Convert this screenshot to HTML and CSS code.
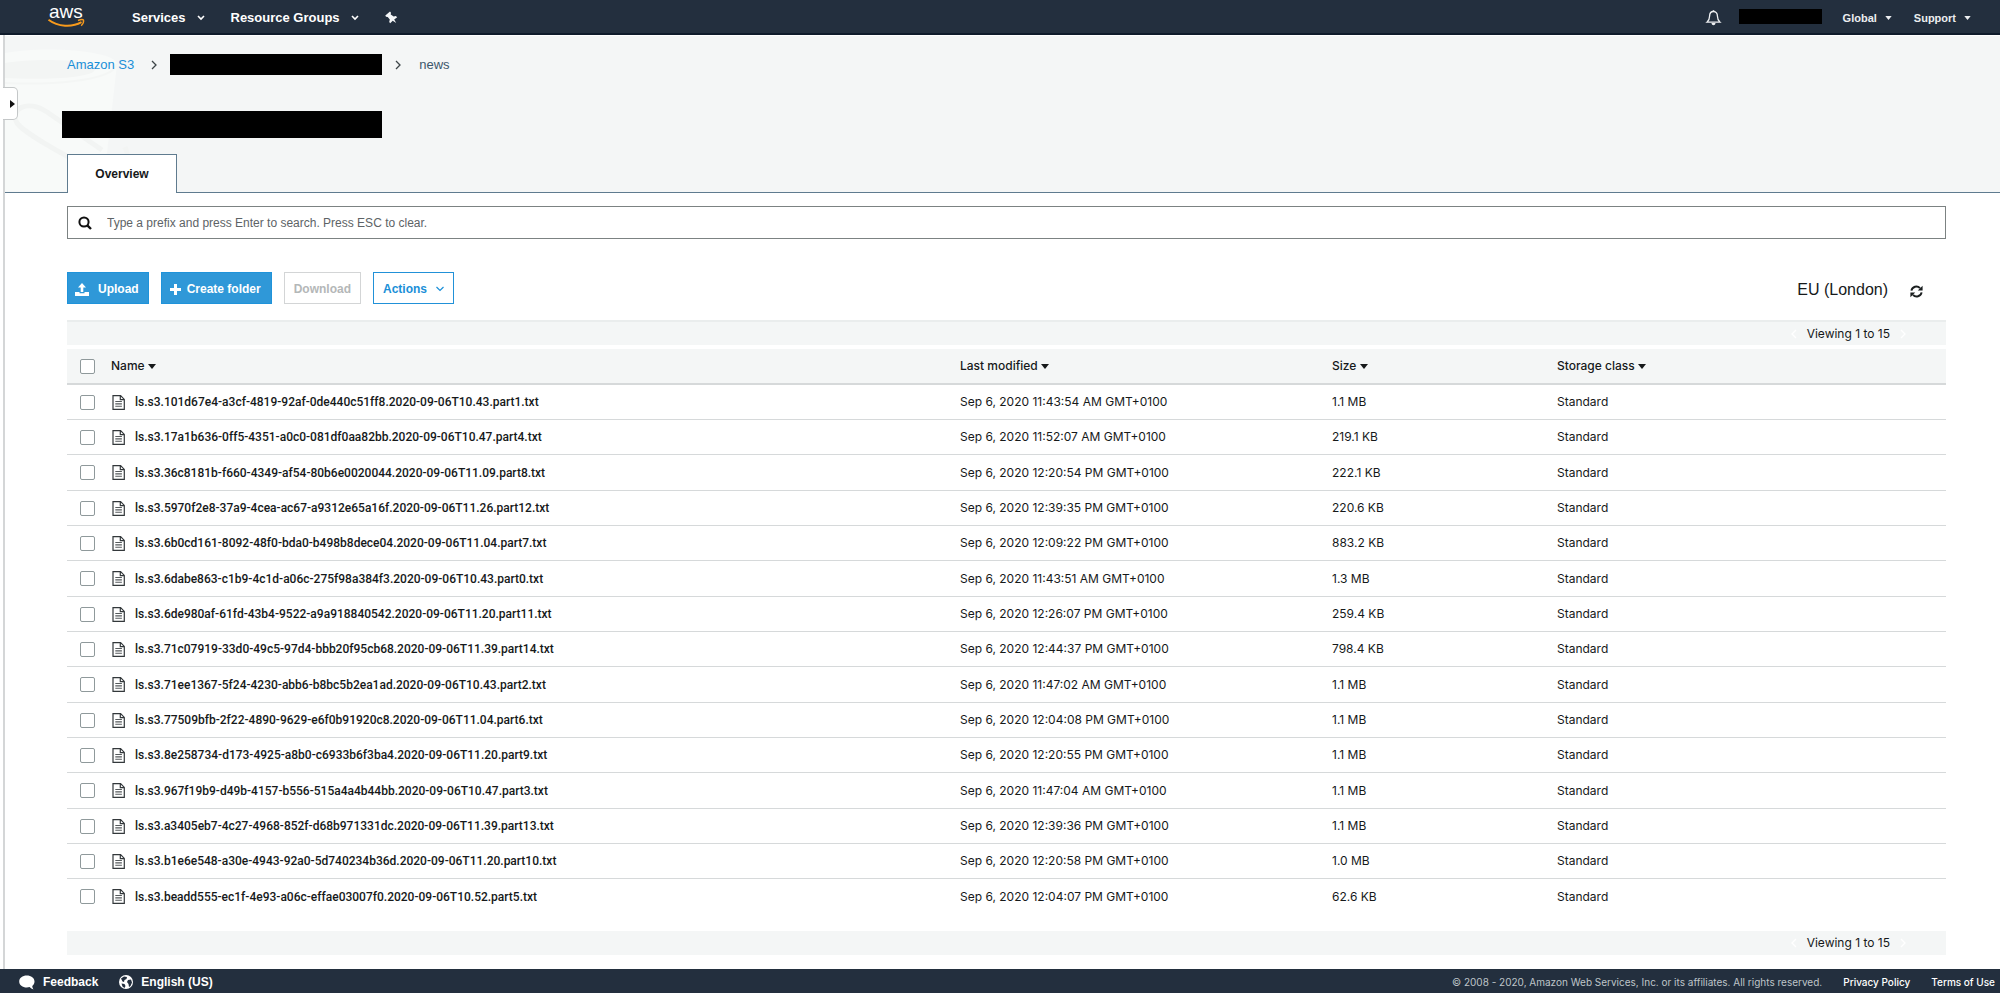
FILE: index.html
```html
<!DOCTYPE html>
<html lang="en">
<head>
<meta charset="utf-8">
<title>S3 Management Console</title>
<link rel="stylesheet" href="styles.css">
</head>
<body>
<svg class="defs" aria-hidden="true">
  <symbol id="doc" viewBox="0 0 13 15"><path d="M1 .7h7.6L12.3 4.400V14.300H1zM8.300 1v3.700h3.800" fill="none" stroke="#33383b" stroke-width="1.200"/><path d="M3.300 6.500h6.600M3.300 8.900h6.600M3.300 11.300h6.600" stroke="#555a5c" stroke-width="1.100"/></symbol>
  <symbol id="chev" viewBox="0 0 8 6"><path d="M1 1l3 3 3-3" fill="none" stroke="currentColor" stroke-width="1.600"/></symbol>
  <symbol id="right" viewBox="0 0 6 10"><path d="M1 1l4 4-4 4" fill="none" stroke="currentColor" stroke-width="1.300"/></symbol>
  <symbol id="left" viewBox="0 0 6 10"><path d="M5 1L1 5l4 4" fill="none" stroke="currentColor" stroke-width="1.300"/></symbol>
  <symbol id="caret" viewBox="0 0 8 5"><path d="M0 0h8L4 5z" fill="currentColor"/></symbol>
</svg>
<header class="topbar">
  <a class="logo" href="#" aria-label="AWS home">
    <svg width="38" height="28" viewBox="0 0 38 28"><text class="logo-text" x="1" y="16">aws</text><path d="M.5 17.800C10 25 24 25.600 33.500 20.200" fill="none" stroke="#f79a1c" stroke-width="1.900"/><path d="M30 18.500c2.500-1 5-1 5.500-.5.400 1.500-.6 4-2.300 5.700" fill="none" stroke="#f79a1c" stroke-width="1.400"/></svg>
  </a>
  <nav class="nav">
    <button class="navbtn">Services <svg width="8" height="6"><use href="#chev"/></svg></button>
    <button class="navbtn">Resource Groups <svg width="8" height="6"><use href="#chev"/></svg></button>
    <button class="navbtn" aria-label="Pin"><svg width="13" height="13" viewBox="0 0 13 13"><path d="M5 .5l1 1.300-.3 1.700 3 1.900 2.100-.5 1.400 1.300-3 2.300 2 3.500-3.500-2.300-2.500 2.500-1-1.300.6-2.500L2.700 6 1 5.800.3 4.500z" fill="#f4f6f8"/></svg></button>
  </nav>
  <div class="account">
    <button class="navbtn bell" aria-label="Notifications"><svg width="15" height="16" viewBox="0 0 15 16"><path d="M7.500 1.500c-2.700 0-3.900 2-3.900 4.500 0 3-.7 4.500-2.600 6.200h13c-1.900-1.700-2.600-3.200-2.600-6.200 0-2.500-1.200-4.500-3.900-4.500z" fill="none" stroke="#eef0f2" stroke-width="1.300"/><path d="M5.500 13h4c-.2 3-3.800 3-4 0zM6.700.3h1.600v1.500H6.700z" fill="#eef0f2"/></svg></button>
    <span class="redacted user"></span>
    <button class="navbtn small region">Global <svg width="7" height="4" viewBox="0 0 8 5"><path d="M0 0h8L4 5z" fill="currentColor"/></svg></button>
    <button class="navbtn small">Support <svg width="7" height="4" viewBox="0 0 8 5"><path d="M0 0h8L4 5z" fill="currentColor"/></svg></button>
  </div>
</header>
<main class="page">
  <button class="drawer" aria-label="Open side menu"><svg width="5" height="8" viewBox="0 0 5 8"><path d="M0 0l5 4-5 4z" fill="#111"/></svg></button>
  <section class="head">
    <svg class="bucket" width="126" height="155" viewBox="0 0 126 155" aria-hidden="true"><path d="M0 16C40 8 112 14 112 27L98 152C70 155 30 155 0 154z" fill="#f8faf9"/><path d="M0 26C30 21 90 22 90 32 90 42 30 43 0 41z" fill="#f3f5f4"/><path d="M112 27C108 45 40 48 0 46" fill="none" stroke="#f4f6f5" stroke-width="2"/><path d="M97 113L42 75C22 62 4 72 12 86C18 95 58 118 80 128C110 140 128 128 120 110" fill="none" stroke="#f2f4f3" stroke-width="5"/></svg>
    <nav class="crumbs" aria-label="Breadcrumb">
      <a href="#">Amazon S3</a>
      <svg width="6" height="10"><use href="#right"/></svg>
      <span class="redacted bucket-name"></span>
      <svg width="6" height="10"><use href="#right"/></svg>
      <span class="current">news</span>
    </nav>
    <h1 class="redacted title"></h1>
    <div class="tabs"><button class="tab">Overview</button></div>
  </section>
  <section class="content">
    <label class="search">
      <svg width="14" height="14" viewBox="0 0 14 14"><circle cx="6" cy="6" r="4.600" fill="none" stroke="#111" stroke-width="2"/><path d="M9.300 9.300l3.700 3.700" stroke="#111" stroke-width="2.400"/></svg>
      <input type="text" aria-label="Search by prefix" placeholder="Type a prefix and press Enter to search. Press ESC to clear.">
    </label>
    <div class="toolbar">
      <button class="btn primary upload"><svg width="14" height="13" viewBox="0 0 14 13"><path d="M7 0l4 4.500H8.300V9H5.700V4.500H3zM0 9h4.500v1.200h5V9H14v4H0z" fill="#fff"/></svg>Upload</button>
      <button class="btn primary create"><svg width="11" height="11" viewBox="0 0 11 11"><path d="M4 0h3v4h4v3H7v4H4V7H0V4h4z" fill="#fff"/></svg>Create folder</button>
      <button class="btn" disabled>Download</button>
      <button class="btn outline">Actions<svg width="8" height="6" viewBox="0 0 8 6"><path d="M.5 1L4 4.500 7.500 1" fill="none" stroke="currentColor" stroke-width="1.200"/></svg></button>
      <span class="where">EU (London)</span>
      <button class="refresh" aria-label="Refresh"><svg width="13" height="13" viewBox="0 0 13 13"><path d="M1.400 5.700A5 5 0 0 1 10 3.200M11.600 7.300A5 5 0 0 1 3 9.800" fill="none" stroke="#1b1f20" stroke-width="1.900"/><path d="M12.600.7v4.800H7.800zM.4 12.300V7.500h4.800z" fill="#1b1f20"/></svg></button>
    </div>
    <div class="pager top"><svg width="6" height="10"><use href="#left"/></svg>Viewing 1 to 15<svg width="6" height="10"><use href="#right"/></svg></div>
    <table class="files">
      <colgroup><col class="c-check"><col><col class="c-date"><col class="c-size"><col class="c-class"></colgroup>
      <thead><tr><th><input type="checkbox" aria-label="Select all"></th><th>Name <svg width="8" height="5"><use href="#caret"/></svg></th><th>Last modified <svg width="8" height="5"><use href="#caret"/></svg></th><th>Size <svg width="8" height="5"><use href="#caret"/></svg></th><th>Storage class <svg width="8" height="5"><use href="#caret"/></svg></th></tr></thead>
      <tbody>
      <tr><td><input type="checkbox" aria-label="Select part1"></td><td><a href="#"><svg width="13" height="15"><use href="#doc"/></svg>ls.s3.101d67e4-a3cf-4819-92af-0de440c51ff8.2020-09-06T10.43.part1.txt</a></td><td>Sep 6, 2020 11:43:54 AM GMT+0100</td><td>1.1 MB</td><td>Standard</td></tr>
      <tr><td><input type="checkbox" aria-label="Select part4"></td><td><a href="#"><svg width="13" height="15"><use href="#doc"/></svg>ls.s3.17a1b636-0ff5-4351-a0c0-081df0aa82bb.2020-09-06T10.47.part4.txt</a></td><td>Sep 6, 2020 11:52:07 AM GMT+0100</td><td>219.1 KB</td><td>Standard</td></tr>
      <tr><td><input type="checkbox" aria-label="Select part8"></td><td><a href="#"><svg width="13" height="15"><use href="#doc"/></svg>ls.s3.36c8181b-f660-4349-af54-80b6e0020044.2020-09-06T11.09.part8.txt</a></td><td>Sep 6, 2020 12:20:54 PM GMT+0100</td><td>222.1 KB</td><td>Standard</td></tr>
      <tr><td><input type="checkbox" aria-label="Select part12"></td><td><a href="#"><svg width="13" height="15"><use href="#doc"/></svg>ls.s3.5970f2e8-37a9-4cea-ac67-a9312e65a16f.2020-09-06T11.26.part12.txt</a></td><td>Sep 6, 2020 12:39:35 PM GMT+0100</td><td>220.6 KB</td><td>Standard</td></tr>
      <tr><td><input type="checkbox" aria-label="Select part7"></td><td><a href="#"><svg width="13" height="15"><use href="#doc"/></svg>ls.s3.6b0cd161-8092-48f0-bda0-b498b8dece04.2020-09-06T11.04.part7.txt</a></td><td>Sep 6, 2020 12:09:22 PM GMT+0100</td><td>883.2 KB</td><td>Standard</td></tr>
      <tr><td><input type="checkbox" aria-label="Select part0"></td><td><a href="#"><svg width="13" height="15"><use href="#doc"/></svg>ls.s3.6dabe863-c1b9-4c1d-a06c-275f98a384f3.2020-09-06T10.43.part0.txt</a></td><td>Sep 6, 2020 11:43:51 AM GMT+0100</td><td>1.3 MB</td><td>Standard</td></tr>
      <tr><td><input type="checkbox" aria-label="Select part11"></td><td><a href="#"><svg width="13" height="15"><use href="#doc"/></svg>ls.s3.6de980af-61fd-43b4-9522-a9a918840542.2020-09-06T11.20.part11.txt</a></td><td>Sep 6, 2020 12:26:07 PM GMT+0100</td><td>259.4 KB</td><td>Standard</td></tr>
      <tr><td><input type="checkbox" aria-label="Select part14"></td><td><a href="#"><svg width="13" height="15"><use href="#doc"/></svg>ls.s3.71c07919-33d0-49c5-97d4-bbb20f95cb68.2020-09-06T11.39.part14.txt</a></td><td>Sep 6, 2020 12:44:37 PM GMT+0100</td><td>798.4 KB</td><td>Standard</td></tr>
      <tr><td><input type="checkbox" aria-label="Select part2"></td><td><a href="#"><svg width="13" height="15"><use href="#doc"/></svg>ls.s3.71ee1367-5f24-4230-abb6-b8bc5b2ea1ad.2020-09-06T10.43.part2.txt</a></td><td>Sep 6, 2020 11:47:02 AM GMT+0100</td><td>1.1 MB</td><td>Standard</td></tr>
      <tr><td><input type="checkbox" aria-label="Select part6"></td><td><a href="#"><svg width="13" height="15"><use href="#doc"/></svg>ls.s3.77509bfb-2f22-4890-9629-e6f0b91920c8.2020-09-06T11.04.part6.txt</a></td><td>Sep 6, 2020 12:04:08 PM GMT+0100</td><td>1.1 MB</td><td>Standard</td></tr>
      <tr><td><input type="checkbox" aria-label="Select part9"></td><td><a href="#"><svg width="13" height="15"><use href="#doc"/></svg>ls.s3.8e258734-d173-4925-a8b0-c6933b6f3ba4.2020-09-06T11.20.part9.txt</a></td><td>Sep 6, 2020 12:20:55 PM GMT+0100</td><td>1.1 MB</td><td>Standard</td></tr>
      <tr><td><input type="checkbox" aria-label="Select part3"></td><td><a href="#"><svg width="13" height="15"><use href="#doc"/></svg>ls.s3.967f19b9-d49b-4157-b556-515a4a4b44bb.2020-09-06T10.47.part3.txt</a></td><td>Sep 6, 2020 11:47:04 AM GMT+0100</td><td>1.1 MB</td><td>Standard</td></tr>
      <tr><td><input type="checkbox" aria-label="Select part13"></td><td><a href="#"><svg width="13" height="15"><use href="#doc"/></svg>ls.s3.a3405eb7-4c27-4968-852f-d68b971331dc.2020-09-06T11.39.part13.txt</a></td><td>Sep 6, 2020 12:39:36 PM GMT+0100</td><td>1.1 MB</td><td>Standard</td></tr>
      <tr><td><input type="checkbox" aria-label="Select part10"></td><td><a href="#"><svg width="13" height="15"><use href="#doc"/></svg>ls.s3.b1e6e548-a30e-4943-92a0-5d740234b36d.2020-09-06T11.20.part10.txt</a></td><td>Sep 6, 2020 12:20:58 PM GMT+0100</td><td>1.0 MB</td><td>Standard</td></tr>
      <tr><td><input type="checkbox" aria-label="Select part5"></td><td><a href="#"><svg width="13" height="15"><use href="#doc"/></svg>ls.s3.beadd555-ec1f-4e93-a06c-effae03007f0.2020-09-06T10.52.part5.txt</a></td><td>Sep 6, 2020 12:04:07 PM GMT+0100</td><td>62.6 KB</td><td>Standard</td></tr>
      </tbody>
    </table>
    <div class="pager"><svg width="6" height="10"><use href="#left"/></svg>Viewing 1 to 15<svg width="6" height="10"><use href="#right"/></svg></div>
  </section>
</main>
<footer class="footer">
  <button class="footbtn"><svg width="16" height="15" viewBox="0 0 16 15"><path d="M7.800.5C3.500.5.200 3 .200 6.500s3.300 6 7.600 6c1 0 2-.1 2.800-.4 1 1.200 2.400 2 4 2.300-.8-1-1.300-2.200-1.300-3.500 1.400-1.100 2.200-2.700 2.200-4.400 0-3.500-3.400-6-7.700-6z" fill="#fff"/></svg>Feedback</button>
  <button class="footbtn"><svg width="14" height="14" viewBox="0 0 14 14"><circle cx="7" cy="7" r="7" fill="#fff"/><path d="M2 3.500l3-2 3 .5-.5 2L5.500 5 5 7 3.500 6.500zM9 5l3-.5 1 3-1.500 3.500L10 12l-.5-3L8 7zM2.500 8.500l3 .5 1 2-1 2-2-1.500z" fill="#232f3e"/></svg>English (US)</button>
  <span class="copy">© 2008 - 2020, Amazon Web Services, Inc. or its affiliates. All rights reserved.</span>
  <a href="#">Privacy Policy</a>
  <a href="#">Terms of Use</a>
</footer>
</body>
</html>
```
FILE: styles.css
```css
* { box-sizing: border-box; }

body {
  margin: 0;
  min-height: 100vh;
  display: flex;
  flex-direction: column;
  background: #fff;
  color: #16191a;
  font-family: "Liberation Sans", Arial, sans-serif;
  font-size: 12px;
  line-height: 16px;
}

button {
  margin: 0;
  padding: 0;
  border: 0;
  background: none;
  color: inherit;
  font: inherit;
  white-space: nowrap;
}

a { color: inherit; text-decoration: none; }
svg { display: block; flex: none; overflow: visible; }
.defs { position: absolute; width: 0; height: 0; overflow: hidden; }
.redacted { display: block; background: #000; }

/* Top bar */
.topbar {
  display: flex;
  align-items: center;
  height: 35px;
  padding: 0 29px 0 48px;
  border-bottom: 2px solid #0f1b2b;
  background: #232f3e;
  color: #fff;
}
.logo { width: 84px; align-self: flex-start; padding-top: 2px; }
.logo-text { font: 400 19px "Liberation Sans", Arial, sans-serif; fill: #fff; }
.nav { display: flex; align-items: center; gap: 26px; }
.navbtn {
  display: flex;
  align-items: center;
  gap: 11px;
  padding-top: 2px;
  font-size: 13px;
  font-weight: 700;
}
.account { display: flex; align-items: center; margin-left: auto; }
.bell { padding-top: 2px; }
.user { width: 83px; height: 15px; margin: 0 21px 0 18px; }
.small { gap: 8px; font-size: 11px; color: #eceef0; }
.region { margin-right: 22px; }

/* Page frame */
.page {
  position: relative;
  flex: 1;
  margin-left: 3px;
  border-left: 2px solid #d4d6d7;
}
.drawer {
  position: absolute;
  top: 52px;
  left: -2px;
  z-index: 1;
  display: flex;
  align-items: center;
  width: 15px;
  height: 33px;
  padding-left: 7px;
  border: 1px solid #c4c7c8;
  border-left: 0;
  border-radius: 0 5px 5px 0;
  background: #fff;
}

/* Heading area */
.head {
  position: relative;
  padding: 18px 0 0 62px;
  border-top: 1px solid #fff;
  background: #f4f6f6;
  box-shadow: inset 0 -1px #5f7b8f;
}
.bucket { position: absolute; left: 0; top: 1px; }
.crumbs {
  position: relative;
  display: flex;
  align-items: center;
  height: 21px;
  font-size: 13px;
  color: #3d4548;
}
.crumbs a { margin-right: 17px; color: #1a8fd8; }
.bucket-name { width: 212px; height: 21px; margin: 0 13px; }
.current { margin-left: 18px; color: #3c566b; }
.title { position: relative; width: 320px; height: 27px; margin: 36px 0 0 -5px; }
.tabs { position: relative; display: flex; margin-top: 16px; }
.tab {
  width: 110px;
  height: 39px;
  border: 1px solid #5f7b8f;
  border-bottom: 0;
  background: #fff;
  font-weight: 700;
}

/* Content */
.content { padding: 13px 54px 14px 62px; }
.search {
  display: flex;
  align-items: center;
  gap: 15px;
  height: 33px;
  padding: 0 10px;
  border: 1px solid #7c8282;
}
.search input {
  flex: 1;
  padding: 0;
  border: 0;
  outline: 0;
  background: none;
  font: inherit;
}
.search input::placeholder { color: #5d6366; opacity: 1; }

.toolbar { display: flex; align-items: center; gap: 12px; margin: 33px 0 16px; }
.btn {
  display: flex;
  align-items: center;
  height: 32px;
  padding: 2px 9px 0;
  border: 1px solid #d3d5d6;
  background: #fff;
  font-weight: 700;
}
.btn:disabled { color: #b4b7b8; }
.primary { border-color: #1f93da; background: #2f98d8; color: #fff; }
.upload { gap: 9px; padding: 2px 9px 0 7px; }
.create { gap: 6px; padding: 2px 10px 0 8px; }
.outline { gap: 9px; border-color: #2191d8; color: #1a8fd8; }
.where { margin: 4px 0 0 auto; font-size: 16px; line-height: 20px; }
.refresh { margin: 6px 23px 0 10px; }

.pager {
  display: flex;
  align-items: center;
  justify-content: flex-end;
  gap: 10px;
  height: 24px;
  padding-right: 40px;
  background: #f4f6f6;
  font-family: Inter, sans-serif;
}
.pager svg { color: #fff; }
.top { height: 25px; margin-bottom: 4px; border-top: 2px solid #eaeded; }

/* File table */
.files {
  width: 100%;
  margin-bottom: 16px;
  border-collapse: separate;
  border-spacing: 0;
  table-layout: fixed;
  font-family: Inter, sans-serif;
}
.c-check { width: 44px; }
.c-date { width: 372px; }
.c-size { width: 225px; }
.c-class { width: 389px; }
.files th {
  height: 36px;
  padding: 0;
  border-bottom: 2px solid #d6d9da;
  background: #f4f6f6;
  font-weight: 500;
  text-align: left;
}
.files th svg { display: inline-block; vertical-align: 1px; }
.files td { height: 35px; padding: 0; border-bottom: 1px solid #d6d9da; }
.files tr:nth-child(3n) td { height: 36px; }
.files tr:last-child td { border-bottom-color: transparent; }
.files a {
  display: flex;
  align-items: center;
  gap: 10px;
  padding-left: 1px;
  font: 500 12px/16px Roboto, sans-serif;
}
.files input {
  appearance: none;
  display: block;
  width: 15px;
  height: 15px;
  margin: 0 0 0 13px;
  border: 1px solid #8f999b;
  border-radius: 2px;
  background: #fff;
}

/* Footer */
.footer {
  display: flex;
  align-items: center;
  gap: 21px;
  height: 24px;
  padding: 2px 5px 0 19px;
  background: #232f3e;
  color: #fff;
  font: 500 10px/14px Inter, sans-serif;
}
.footbtn {
  display: flex;
  align-items: center;
  gap: 8px;
  font: 700 12px/16px "Liberation Sans", Arial, sans-serif;
}
.copy { margin-left: auto; font-weight: 400; color: #bfc5c9; }
```
